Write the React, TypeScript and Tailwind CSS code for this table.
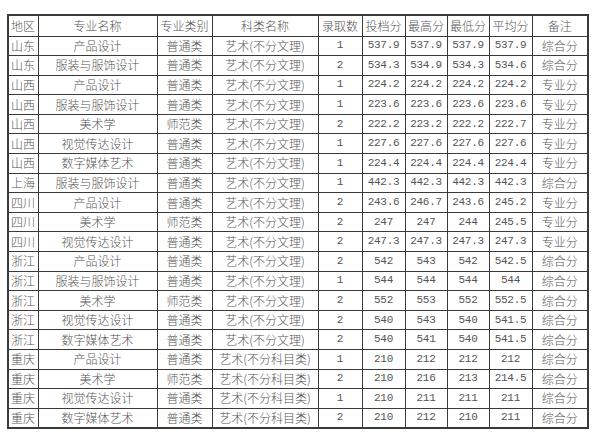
const rows: string[][] = [
  ['山东', '产品设计', '普通类', '艺术(不分文理)', '1', '537.9', '537.9', '537.9', '537.9', '综合分'],
  ['山东', '服装与服饰设计', '普通类', '艺术(不分文理)', '2', '534.3', '534.9', '534.3', '534.6', '综合分'],
  ['山西', '产品设计', '普通类', '艺术(不分文理)', '1', '224.2', '224.2', '224.2', '224.2', '专业分'],
  ['山西', '服装与服饰设计', '普通类', '艺术(不分文理)', '1', '223.6', '223.6', '223.6', '223.6', '专业分'],
  ['山西', '美术学', '师范类', '艺术(不分文理)', '2', '222.2', '223.2', '222.2', '222.7', '专业分'],
  ['山西', '视觉传达设计', '普通类', '艺术(不分文理)', '1', '227.6', '227.6', '227.6', '227.6', '专业分'],
  ['山西', '数字媒体艺术', '普通类', '艺术(不分文理)', '1', '224.4', '224.4', '224.4', '224.4', '专业分'],
  ['上海', '服装与服饰设计', '普通类', '艺术(不分文理)', '1', '442.3', '442.3', '442.3', '442.3', '综合分'],
  ['四川', '产品设计', '普通类', '艺术(不分文理)', '2', '243.6', '246.7', '243.6', '245.2', '专业分'],
  ['四川', '美术学', '师范类', '艺术(不分文理)', '2', '247', '247', '244', '245.5', '专业分'],
  ['四川', '视觉传达设计', '普通类', '艺术(不分文理)', '2', '247.3', '247.3', '247.3', '247.3', '专业分'],
  ['浙江', '产品设计', '普通类', '艺术(不分文理)', '2', '542', '543', '542', '542.5', '综合分'],
  ['浙江', '服装与服饰设计', '普通类', '艺术(不分文理)', '1', '544', '544', '544', '544', '综合分'],
  ['浙江', '美术学', '师范类', '艺术(不分文理)', '2', '552', '553', '552', '552.5', '综合分'],
  ['浙江', '视觉传达设计', '普通类', '艺术(不分文理)', '2', '540', '543', '540', '541.5', '综合分'],
  ['浙江', '数字媒体艺术', '普通类', '艺术(不分文理)', '2', '540', '541', '540', '541.5', '综合分'],
  ['重庆', '产品设计', '普通类', '艺术(不分科目类)', '1', '210', '212', '212', '212', '综合分'],
  ['重庆', '美术学', '师范类', '艺术(不分科目类)', '2', '210', '216', '213', '214.5', '综合分'],
  ['重庆', '视觉传达设计', '普通类', '艺术(不分科目类)', '1', '210', '211', '211', '211', '综合分'],
  ['重庆', '数字媒体艺术', '普通类', '艺术(不分科目类)', '2', '210', '212', '210', '211', '综合分'],
];

const head = ['地区', '专业名称', '专业类别', '科类名称', '录取数', '投档分', '最高分', '最低分', '平均分', '备注'];
const widths = [30, 119, 55, 106, 44, 43, 42, 42, 43, 56];

const cjk = "[font-family:'Noto_Sans_CJK_SC',sans-serif]";
const num = "[font-family:'Liberation_Mono','Noto_Sans_CJK_SC',monospace]";

export default function App() {
  return (
    <div className="w-[595px] h-[444px] bg-white pt-[14px] pl-[7px]">
      <table className="border-collapse border-2 border-[#3a3a3a] text-[#555] table-fixed w-[580px]">
        <colgroup>
          {widths.map((w, i) => (
            <col key={i} style={{ width: w }} />
          ))}
        </colgroup>
        <thead>
          <tr className="h-[21px]">
            {head.map((h, i) => (
              <th
                key={h}
                className={`border border-[#3a3a3a] p-0 font-light text-[12px] leading-none whitespace-nowrap ${cjk} ${i === 0 ? 'text-left pl-[2px]' : 'text-center'}`}
              >
                {h}
              </th>
            ))}
          </tr>
        </thead>
        <tbody>
          {rows.map((r, ri) => (
            <tr key={ri} className="h-[19.6px]">
              {r.map((c, ci) => {
                const isNum = ci >= 4 && ci <= 8;
                return (
                  <td
                    key={ci}
                    className={`border border-[#3a3a3a] p-0 leading-none whitespace-nowrap ${
                      isNum ? `${num} text-[11px] tracking-[-0.3px]` : `${cjk} text-[12px] font-light`
                    } ${ci === 0 ? 'text-left pl-[2px]' : 'text-center'}`}
                  >
                    {c}
                  </td>
                );
              })}
            </tr>
          ))}
        </tbody>
      </table>
    </div>
  );
}
